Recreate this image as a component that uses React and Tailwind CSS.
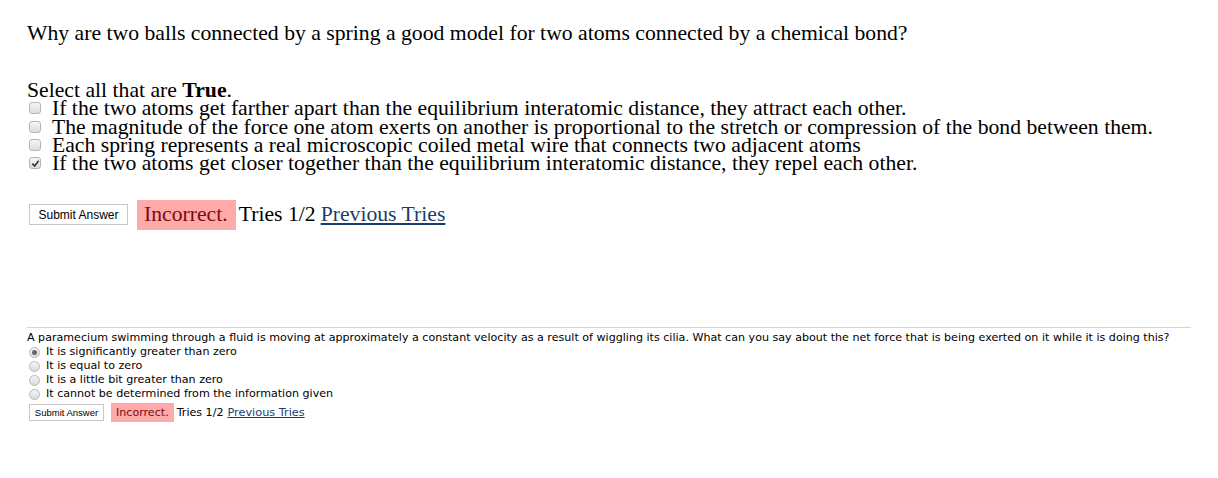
import React from "react";

const serif = { fontFamily: '"Liberation Serif", "Times New Roman", serif' };

const firstOptions = [
  { text: "If the two atoms get farther apart than the equilibrium interatomic distance, they attract each other.", checked: false },
  { text: "The magnitude of the force one atom exerts on another is proportional to the stretch or compression of the bond between them.", checked: false },
  { text: "Each spring represents a real microscopic coiled metal wire that connects two adjacent atoms", checked: false },
  { text: "If the two atoms get closer together than the equilibrium interatomic distance, they repel each other.", checked: true },
];

const secondOptions = [
  { text: "It is significantly greater than zero", checked: true },
  { text: "It is equal to zero", checked: false },
  { text: "It is a little bit greater than zero", checked: false },
  { text: "It cannot be determined from the information given", checked: false },
];

function Checkbox({ checked }) {
  return (
    <span className="inline-flex h-[12px] w-[12px] shrink-0 items-center justify-center rounded-[3px] border border-[#b4b4b4] bg-gradient-to-b from-[#f6f6f6] to-[#dcdcdc]">
      {checked && (
        <svg width="9" height="9" viewBox="0 0 10 10">
          <path d="M1.5 5.2 L4 7.8 L8.6 2" fill="none" stroke="#333" strokeWidth="1.8" />
        </svg>
      )}
    </span>
  );
}

function Radio({ checked }) {
  return (
    <span className="inline-flex h-[11px] w-[11px] shrink-0 items-center justify-center rounded-full border border-[#b8b8b8] bg-gradient-to-b from-[#f6f6f6] to-[#dadada]">
      {checked && <span className="h-[5px] w-[5px] rounded-full bg-[#666]" />}
    </span>
  );
}

export default function App() {
  return (
    <div className="h-[478px] w-[1218px] overflow-hidden bg-white text-black">
      {/* first problem */}
      <div className="pl-[27px] pt-[20px] text-[21.7px]" style={serif}>
        <p className="leading-[26px]">
          Why are two balls connected by a spring a good model for two atoms connected by a chemical bond?
        </p>
        <div className="mt-[35px] leading-[18.3px]">
          <p>
            Select all that are <b>True</b>.
          </p>
          {firstOptions.map((o) => (
            <div key={o.text} className="flex items-center">
              <span className="flex w-[25px] pl-[2px]">
                <Checkbox checked={o.checked} />
              </span>
              <span>{o.text}</span>
            </div>
          ))}
        </div>
        <div className="mt-[26px] flex items-center">
          <button
            className="ml-[2px] h-[21px] w-[99px] border border-[#c8c8c8] bg-white text-[12px] leading-none"
            style={{ fontFamily: '"Liberation Sans", Arial, sans-serif' }}
          >
            Submit Answer
          </button>
          <span className="ml-[9px] flex h-[30px] items-center bg-[#ffa9a9] pl-[7px] pr-[8px] text-[#7a0c0c]">
            Incorrect.
          </span>
          <span className="ml-[3px]">Tries 1/2</span>
          <a href="#" className="ml-[5px] text-[#1a3d6d] underline">
            Previous Tries
          </a>
        </div>
      </div>

      {/* second problem */}
      <div
        className="mx-[27px] mt-[96px] border-t border-[#d2d2e6] pt-[3px] text-[11.1px] leading-[14px]"
        style={{ fontFamily: '"DejaVu Sans", Verdana, sans-serif' }}
      >
        <p>
          A paramecium swimming through a fluid is moving at approximately a constant velocity as a result of wiggling its cilia. What can you say about the net force that is being exerted on it while it is doing this?
        </p>
        {secondOptions.map((o) => (
          <div key={o.text} className="flex items-center">
            <span className="flex w-[19px] pl-[2px]">
              <Radio checked={o.checked} />
            </span>
            <span>{o.text}</span>
          </div>
        ))}
        <div className="mt-[2px] flex items-center">
          <button
            className="ml-[2px] h-[17px] w-[75px] border border-[#c8c8c8] bg-white text-[9.5px] leading-none"
            style={{ fontFamily: '"Liberation Sans", Arial, sans-serif' }}
          >
            Submit Answer
          </button>
          <span className="ml-[7px] flex h-[19px] items-center bg-[#ffa9a9] px-[5px] text-[#7a0c0c]">
            Incorrect.
          </span>
          <span className="ml-[3px]">Tries 1/2</span>
          <a href="#" className="ml-[4px] text-[11.3px] text-[#1a3d6d] underline">
            Previous Tries
          </a>
        </div>
      </div>
    </div>
  );
}
